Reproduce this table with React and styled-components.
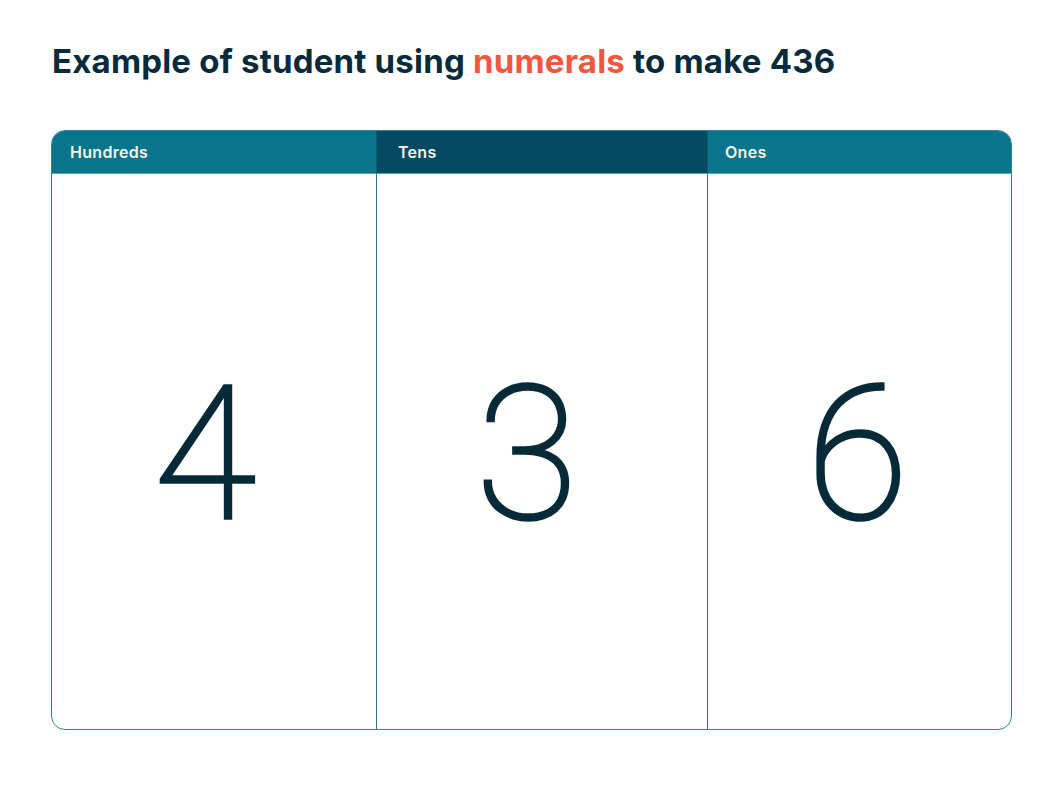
import React from 'react';
import styled, { createGlobalStyle } from 'styled-components';

const GlobalStyle = createGlobalStyle`
  body {
    margin: 0;
    background: #ffffff;
    font-family: 'Inter', 'Liberation Sans', sans-serif;
  }
`;

const Page = styled.div`
  width: 1062px;
  height: 800px;
  padding: 40px 50px 0 51px;
  box-sizing: border-box;
`;

const Title = styled.h1`
  margin: 0 0 48px 1px;
  font-size: 33px;
  line-height: 42px;
  font-weight: 700;
  color: #072b3b;
  letter-spacing: 0.2px;
`;

const Accent = styled.span`
  color: #f0573d;
`;

const Table = styled.div`
  display: grid;
  grid-template-columns: 324px 331px 1fr;
  grid-template-rows: 43px 1fr;
  width: 961px;
  height: 600px;
  border: 1px solid #2f8599;
  border-radius: 14px;
  overflow: hidden;
  box-sizing: border-box;
`;

const Head = styled.div`
  display: flex;
  align-items: center;
  padding-left: ${props => props.pad || 18}px;
  background: ${props => (props.active ? '#034a62' : '#08758c')};
  color: #f7f2e8;
  font-size: 16px;
  font-weight: 600;
  letter-spacing: 0.3px;
  border-bottom: 1px solid #5aa3b4;
  border-left: ${props => (props.first ? 'none' : '1px solid #0a5d72')};
`;

const Cell = styled.div`
  display: flex;
  align-items: center;
  justify-content: center;
  border-left: ${props => (props.first ? 'none' : '1px solid #2a7689')};
  padding-right: ${props => props.shift || 0}px;
  padding-top: 4px;
`;

const Digit = styled.span`
  font-family: 'Roboto', sans-serif;
  font-weight: 100;
  font-size: 186px;
  line-height: 1;
  color: #062a38;
  -webkit-text-stroke: 3.5px #062a38;
`;

const columns = [
  { label: 'Hundreds', value: '4', pad: 18, shift: 18 },
  { label: 'Tens', value: '3', pad: 21, shift: 30 },
  { label: 'Ones', value: '6', pad: 17, shift: 4 },
];

export default function App() {
  return (
    <Page>
      <GlobalStyle />
      <Title>
        Example of student using <Accent>numerals</Accent> to make 436
      </Title>
      <Table>
        {columns.map((c, i) => (
          <Head key={c.label} first={i === 0} active={i === 1} pad={c.pad}>
            {c.label}
          </Head>
        ))}
        {columns.map((c, i) => (
          <Cell key={c.value} first={i === 0} shift={c.shift}>
            <Digit>{c.value}</Digit>
          </Cell>
        ))}
      </Table>
    </Page>
  );
}
